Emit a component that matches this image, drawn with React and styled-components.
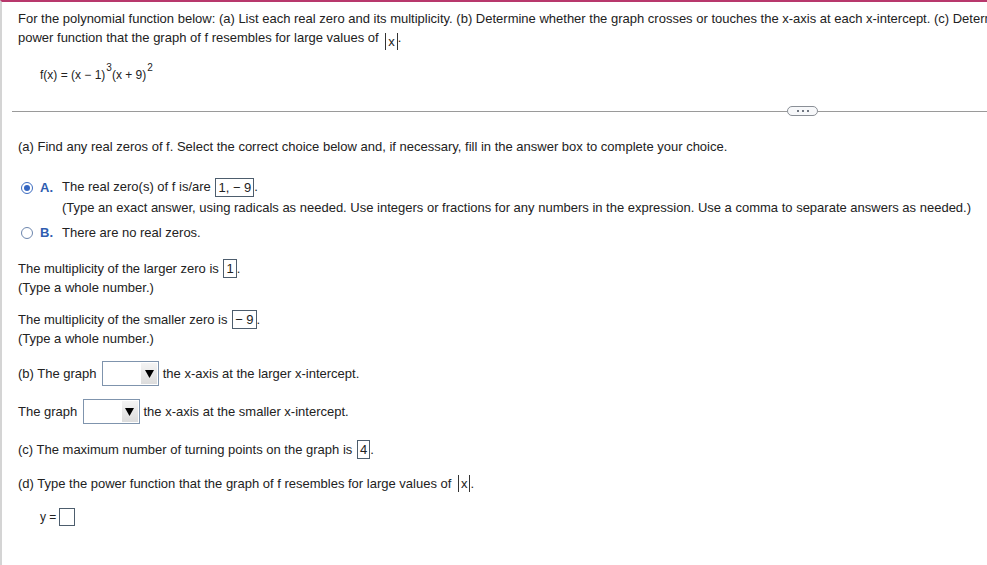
import styled, { createGlobalStyle } from 'styled-components'

const GlobalStyle = createGlobalStyle`
      html, body {
            margin: 0;
            padding: 0;
            background: #fff;
      }
      body {
            font-family: "Liberation Sans", Arial, sans-serif;
            font-size: 13px;
            color: #222;
      }
`

const App = () => {
      return (
            <Page>
                  <GlobalStyle />
                  <Prompt>
                        For the polynomial function below: (a) List each real zero and its multiplicity. (b) Determine whether the graph crosses or touches the x-axis at each x-intercept. (c) Determine the
                        <br />
                        power function that the graph of f resembles for large values of <Abs>x</Abs>.
                  </Prompt>
                  <Formula>
                        f(x) = (x − 1)<Sup>3</Sup>(x + 9)<Sup>2</Sup>
                  </Formula>
                  <Divider>
                        <Rule $w="775px" />
                        <Pill><Dot /><Dot /><Dot /></Pill>
                        <Rule />
                  </Divider>

                  <Line $mt="21px">(a) Find any real zeros of f. Select the correct choice below and, if necessary, fill in the answer box to complete your choice.</Line>

                  <Choice $mt="21px" $h="21px">
                        <Radio $checked />
                        <Letter>A.</Letter>
                        <span>The real zero(s) of f is/are <Box>1, − 9</Box>.</span>
                  </Choice>
                  <Hint>(Type an exact answer, using radicals as needed. Use integers or fractions for any numbers in the expression. Use a comma to separate answers as needed.)</Hint>
                  <Choice $mt="6px" $h="19px">
                        <Radio />
                        <Letter>B.</Letter>
                        <span>There are no real zeros.</span>
                  </Choice>

                  <Line $mt="16px" $h="20px">The multiplicity of the larger zero is <Box>1</Box>.</Line>
                  <Line>(Type a whole number.)</Line>
                  <Line $mt="12px" $h="20px">The multiplicity of the smaller zero is <Box>− 9</Box>.</Line>
                  <Line>(Type a whole number.)</Line>

                  <Line $mt="13px" $h="25px">
                        (b) The graph <Select /> the x-axis at the larger x-intercept.
                  </Line>
                  <Line $mt="13px" $h="25px">
                        The graph <Select /> the x-axis at the smaller x-intercept.
                  </Line>

                  <Line $mt="15px" $h="20px">(c) The maximum number of turning points on the graph is <Box>4</Box>.</Line>
                  <Line $mt="14px" $h="20px">(d) Type the power function that the graph of f resembles for large values of <Abs>x</Abs>.</Line>
                  <Line $mt="14px" $h="20px" $indent="22px">
                        <Small>y =</Small><EmptyBox />
                  </Line>
            </Page>
      )
}; export default App

const Select = () => (
      <DropBox>
            <DropArrow>
                  <svg width="9" height="8" viewBox="0 0 9 8"><path d="M0 0 H9 L4.5 8 Z" fill="#000" /></svg>
            </DropArrow>
      </DropBox>
)

const Page = styled.div `
      box-sizing: border-box;
      width: 987px;
      height: 565px;
      overflow: hidden;
      border-top: 2px solid #b8386c;
      border-left: 2px solid #d4d4d4;
      padding: 7px 0 0 16px;
      display: flex;
      flex-direction: column;
      align-items: flex-start;
`

const Prompt = styled.p `
      margin: 0;
      line-height: 19px;
      white-space: nowrap;
`

const Abs = styled.span `
      display: inline-block;
      border-left: 1px solid #333;
      border-right: 1px solid #333;
      padding: 0 2px;
      margin-left: 3px;
      line-height: 17px;
      vertical-align: -4px;
`

const Formula = styled.div `
      margin: 16px 0 0 22px;
      font-size: 12px;
      line-height: 19px;
`

const Sup = styled.span `
      font-size: 10px;
      line-height: 0;
      vertical-align: 8px;
      margin-left: 1px;
`

const Divider = styled.div `
      margin: 21px 0 0 -6px;
      width: 985px;
      height: 10px;
      display: flex;
      align-items: center;
`

const Rule = styled.div `
      height: 1px;
      background: #9a9a9a;
      flex: ${({$w}) => ($w ? `0 0 ${$w}` : '1')};
`

const Pill = styled.div `
      box-sizing: border-box;
      width: 31px;
      height: 10px;
      border: 1px solid #8a8f96;
      border-radius: 5px;
      background: #f7f8fa;
      display: flex;
      align-items: center;
      justify-content: center;
      gap: 3px;
`

const Dot = styled.span `
      width: 2px;
      height: 2px;
      background: #444d58;
      border-radius: 1px;
`

const Line = styled.div `
      margin-top: ${({$mt}) => $mt || '0'};
      margin-left: ${({$indent}) => $indent || '0'};
      height: ${({$h}) => $h || '19px'};
      display: flex;
      align-items: center;
      white-space: pre;
`

const Choice = styled.div `
      margin-top: ${({$mt}) => $mt};
      height: ${({$h}) => $h};
      display: flex;
      align-items: center;
      margin-left: 3px;
      white-space: pre;
`

const Radio = styled.span `
      box-sizing: border-box;
      width: 12px;
      height: 12px;
      border-radius: 50%;
      border: 1px solid ${({$checked}) => ($checked ? '#3d6cc0' : '#6d86ad')};
      background: #fff;
      display: flex;
      align-items: center;
      justify-content: center;
      margin-right: 7px;

      &::after {
            content: '';
            display: ${({$checked}) => ($checked ? 'block' : 'none')};
            width: 6px;
            height: 6px;
            border-radius: 50%;
            background: #3466c2;
      }
`

const Letter = styled.span `
      color: #2f5db0;
      font-weight: 700;
      width: 22px;
`

const Hint = styled.div `
      margin-left: 44px;
      height: 19px;
      line-height: 19px;
      white-space: nowrap;
`

const Box = styled.span `
      display: inline-block;
      border: 1px solid #4d5d6d;
      padding: 0 2px;
      line-height: 17px;
      height: 17px;
      vertical-align: middle;
      margin-left: 1px;
`

const Small = styled.span `
      font-size: 12px;
      margin-right: 3px;
`

const EmptyBox = styled.span `
      box-sizing: border-box;
      display: inline-block;
      width: 16px;
      height: 18px;
      border: 1px solid #4d5d6d;
`

const DropBox = styled.span `
      box-sizing: border-box;
      display: inline-flex;
      justify-content: flex-end;
      width: 57px;
      height: 25px;
      border: 1px solid #7f94ad;
      background: #fff;
      padding: 1px;
      margin: 0 0 0 2px;
`

const DropArrow = styled.span `
      width: 16px;
      height: 100%;
      background: linear-gradient(#f4f4f4, #dcdcdc);
      display: flex;
      align-items: center;
      justify-content: center;
`
